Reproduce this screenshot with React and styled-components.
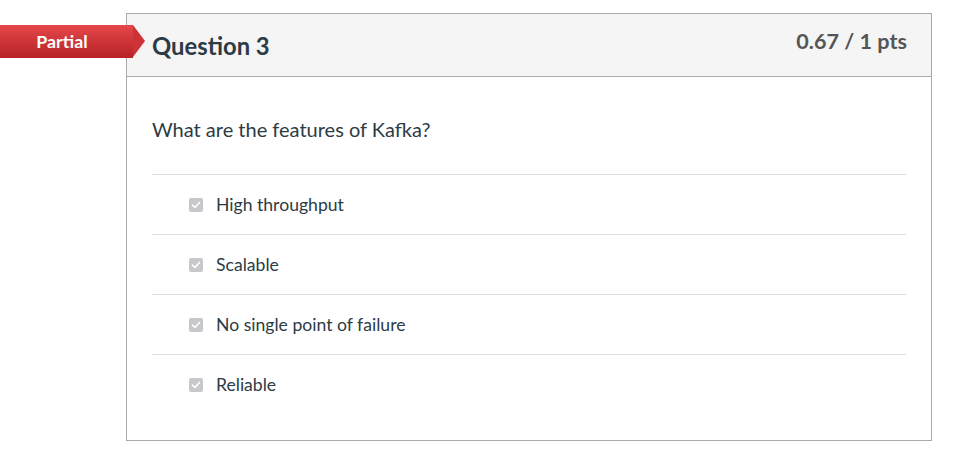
import React from "react";
import styled, { createGlobalStyle } from "styled-components";

const Global = createGlobalStyle`
  html, body { margin: 0; padding: 0; background: #fff; }
  body { font-family: Lato, "Open Sans", sans-serif; color: #2d3b45; }
`;

const Page = styled.div`
  position: relative;
  padding: 13px 26px 0 126px;
`;

const Badge = styled.div`
  position: absolute;
  left: 0;
  top: 25px;
  height: 33px;
  width: 133px;
  background: linear-gradient(#e4474a, #b72226);
  color: #fff;
  font-weight: 700;
  font-size: 17.8px;
  display: flex;
  align-items: center;
  justify-content: center;
  padding-right: 9px;
  padding-bottom: 2px;
  box-sizing: border-box;
  z-index: 2;
  &::after {
    content: "";
    position: absolute;
    right: -12px;
    top: 0;
    border-style: solid;
    border-width: 16.5px 0 16.5px 12px;
    border-color: transparent transparent transparent #cd3336;
  }
`;

const Card = styled.div`
  width: 806px;
  box-sizing: border-box;
  border: 1px solid #aaa;
`;

const Header = styled.div`
  height: 63px;
  box-sizing: border-box;
  background: #f5f5f5;
  border-bottom: 1px solid #aaa;
  display: flex;
  justify-content: space-between;
  align-items: flex-start;
  padding: 0 24px 0 25px;
`;

const Title = styled.h2`
  margin: 0;
  padding-top: 18px;
  font-size: 23.8px;
  font-weight: 700;
  color: #2d3b45;
  line-height: 28px;
`;

const Points = styled.div`
  padding-top: 14px;
  font-size: 21.6px;
  font-weight: 700;
  color: #555;
  line-height: 26px;
`;

const Body = styled.div`
  padding: 0 25px 26px 25px;
`;

const QuestionText = styled.p`
  margin: 0;
  padding: 40px 0 32px;
  font-size: 20px;
  line-height: 25px;
  color: #2d3b45;
`;

const Answer = styled.div`
  height: 60px;
  box-sizing: border-box;
  border-top: 1px solid #ddd;
  display: flex;
  align-items: center;
  padding-left: 37px;
  padding-bottom: 1px;
  font-size: 17.6px;
  color: #2d3b45;
`;

const Box = styled.span`
  width: 14px;
  height: 14px;
  border-radius: 2px;
  background: #c8c8cc;
  display: inline-flex;
  align-items: center;
  justify-content: center;
  margin-right: 13px;
  margin-top: 1px;
`;

const Check = () => (
  <svg width="10" height="10" viewBox="0 0 10 10">
    <path d="M1.5 5.2 L4 7.5 L8.5 2.5" fill="none" stroke="#fff" strokeWidth="1.6" strokeLinecap="round" strokeLinejoin="round" />
  </svg>
);

const answers = ["High throughput", "Scalable", "No single point of failure", "Reliable"];

export default function App() {
  return (
    <>
      <Global />
      <Page>
        <Badge>Partial</Badge>
        <Card>
          <Header>
            <Title>Question 3</Title>
            <Points>0.67 / 1 pts</Points>
          </Header>
          <Body>
            <QuestionText>What are the features of Kafka?</QuestionText>
            {answers.map((a) => (
              <Answer key={a}>
                <Box><Check /></Box>
                {a}
              </Answer>
            ))}
          </Body>
        </Card>
      </Page>
    </>
  );
}
